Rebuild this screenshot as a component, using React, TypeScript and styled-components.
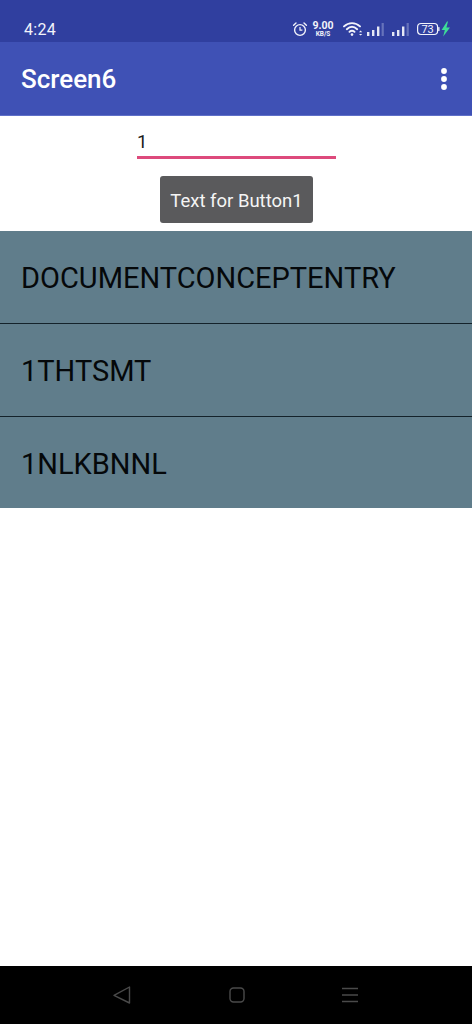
import styled, { createGlobalStyle } from "styled-components";

const GlobalStyle = createGlobalStyle`
  html, body {
    margin: 0;
    padding: 0;
    background: #ffffff;
  }
  * {
    box-sizing: border-box;
  }
`;

const Page = styled.div`
  width: 472px;
  height: 1024px;
  display: flex;
  flex-direction: column;
  font-family: Roboto, "Liberation Sans", sans-serif;
  overflow: hidden;
`;

const StatusBar = styled.div`
  height: 42px;
  flex: none;
  background: #303f9f;
  color: #f2f3fa;
  display: flex;
  align-items: center;
  justify-content: space-between;
  padding: 16px 22px 0 24px;
`;

const Clock = styled.span`
  font-size: 16px;
  letter-spacing: 0.3px;
`;

const StatusIcons = styled.div`
  display: flex;
  align-items: center;
`;

const Speed = styled.div`
  display: flex;
  flex-direction: column;
  align-items: center;
  width: 20px;
  margin: 0 10px 0 5px;
  font-weight: 700;
  line-height: 1;
`;

const SpeedValue = styled.span`
  font-size: 10.5px;
`;

const SpeedUnit = styled.span`
  font-size: 6.5px;
`;

const Wifi = styled.svg`
  margin-right: 4px;
`;

const Bars = styled.svg`
  margin-right: 8px;
`;

const AppBar = styled.header`
  height: 74px;
  flex: none;
  background: #3f51b5;
  color: #ffffff;
  display: flex;
  align-items: center;
  justify-content: space-between;
  padding: 0 24px 0 21px;
  border-bottom: 1px solid #5f70c8;
`;

const Title = styled.h1`
  margin: 0;
  font-size: 26px;
  font-weight: 500;
`;

const Form = styled.div`
  display: flex;
  flex-direction: column;
  align-items: center;
  height: 115px;
  flex: none;
  padding-top: 14px;
`;

const Field = styled.div`
  width: 199px;
  height: 29px;
  margin-left: 1px;
  border-bottom: 3px solid #dd4a7c;
  color: #1a1a1a;
  font-size: 18.5px;
  line-height: 25px;
`;

const Action = styled.button`
  margin-top: 17px;
  width: 153px;
  height: 47px;
  border: none;
  border-radius: 3px;
  background: #5a5a5c;
  color: #f5f5f5;
  font-family: inherit;
  font-size: 18.5px;
  padding: 2px 0 0 1px;
`;

const List = styled.ul`
  list-style: none;
  margin: 0;
  padding: 0;
`;

const Item = styled.li`
  height: 93px;
  background: #607d8b;
  color: #05080a;
  font-size: 29px;
  display: flex;
  align-items: center;
  padding: 2px 0 0 21px;
  border-bottom: 1px solid #14222a;

  &:last-child {
    height: 91px;
    padding-top: 3px;
    border-bottom: none;
  }
`;

const Spacer = styled.div`
  flex: 1;
`;

const NavBar = styled.nav`
  height: 58px;
  flex: none;
  background: #000000;
  display: flex;
  align-items: center;
  justify-content: space-between;
  padding: 0 114px 0 113px;
`;

function AlarmIcon() {
  return (
    <svg width="16" height="16" viewBox="0 0 16 16" fill="none" stroke="#f2f3fa" strokeWidth="1.4">
      <circle cx="8" cy="9" r="5.4" />
      <path d="M8 6v3.2h2.4" strokeWidth="1.2" />
      <path d="M1.6 4.2 4 2M14.4 4.2 12 2" strokeLinecap="round" />
    </svg>
  );
}

function WifiIcon() {
  return (
    <Wifi width="20" height="16" viewBox="0 0 20 16" fill="none" stroke="#f2f3fa" strokeWidth="1.9" strokeLinecap="round">
      <path d="M1 5.4C5.6 1 12.4 1 17 5.4" />
      <path d="M3.8 8.2C7 5.3 11 5.3 14.2 8.2" />
      <path d="M6.5 10.8C8 9.6 10 9.6 11.5 10.8" />
      <circle cx="9" cy="13.6" r="1.3" fill="#f2f3fa" stroke="none" />
      <path d="M17.6 9.5 16 11.2h3.2ZM17.6 14.6 16 12.9h3.2Z" fill="#f2f3fa" stroke="none" />
    </Wifi>
  );
}

function SignalIcon() {
  return (
    <Bars width="17" height="15" viewBox="0 0 17 15">
      <rect x="0" y="10" width="2.4" height="4" fill="#e6e8f4" />
      <rect x="5" y="8" width="2.4" height="6" fill="#e6e8f4" />
      <rect x="10" y="4.5" width="2.4" height="9.5" fill="#e6e8f4" />
      <rect x="14.6" y="1" width="2.2" height="13" fill="#6673bb" />
    </Bars>
  );
}

function BatteryIcon() {
  return (
    <svg width="33" height="16" viewBox="0 0 33 16">
      <rect x="0.6" y="2.5" width="20" height="11" rx="3.5" fill="none" stroke="#f2f3fa" strokeWidth="1.2" />
      <rect x="21.2" y="6" width="1.3" height="4" rx="0.6" fill="#f2f3fa" />
      <text x="10.6" y="12.2" textAnchor="middle" fontSize="11" fill="#f2f3fa" fontFamily="Roboto, sans-serif">
        73
      </text>
      <path d="M30 0.5 24.6 9h3.2L26.2 15.5 33 6.6h-3.6L31 0.5Z" fill="#3ddc97" />
    </svg>
  );
}

function MoreIcon() {
  return (
    <svg width="8" height="24" viewBox="0 0 8 24" fill="#ffffff">
      <circle cx="4" cy="4" r="2.9" />
      <circle cx="4" cy="12" r="2.9" />
      <circle cx="4" cy="20" r="2.9" />
    </svg>
  );
}

function BackIcon() {
  return (
    <svg width="18" height="18" viewBox="0 0 18 18" fill="none" stroke="#4a4a4a" strokeWidth="1.4" strokeLinejoin="round">
      <path d="M16.5 1 1 9.4 16.5 17Z" />
    </svg>
  );
}

function HomeIcon() {
  return (
    <svg width="16" height="16" viewBox="0 0 16 16" fill="none" stroke="#4a4a4a" strokeWidth="1.4">
      <rect x="1" y="1" width="14" height="14" rx="3.5" />
    </svg>
  );
}

function MenuIcon() {
  return (
    <svg width="16" height="16" viewBox="0 0 16 16" stroke="#4a4a4a" strokeWidth="1.4">
      <path d="M0 1.5h16M0 8h16M0 14.5h16" />
    </svg>
  );
}

const items = ["DOCUMENTCONCEPTENTRY", "1THTSMT", "1NLKBNNL"];

function App() {
  return (
    <Page>
      <GlobalStyle />
      <StatusBar>
        <Clock>4:24</Clock>
        <StatusIcons>
          <AlarmIcon />
          <Speed>
            <SpeedValue>9.00</SpeedValue>
            <SpeedUnit>KB/S</SpeedUnit>
          </Speed>
          <WifiIcon />
          <SignalIcon />
          <SignalIcon />
          <BatteryIcon />
        </StatusIcons>
      </StatusBar>
      <AppBar>
        <Title>Screen6</Title>
        <MoreIcon />
      </AppBar>
      <Form>
        <Field>1</Field>
        <Action>Text for Button1</Action>
      </Form>
      <List>
        {items.map((item) => (
          <Item key={item}>{item}</Item>
        ))}
      </List>
      <Spacer />
      <NavBar>
        <BackIcon />
        <HomeIcon />
        <MenuIcon />
      </NavBar>
    </Page>
  );
}

export default App;
